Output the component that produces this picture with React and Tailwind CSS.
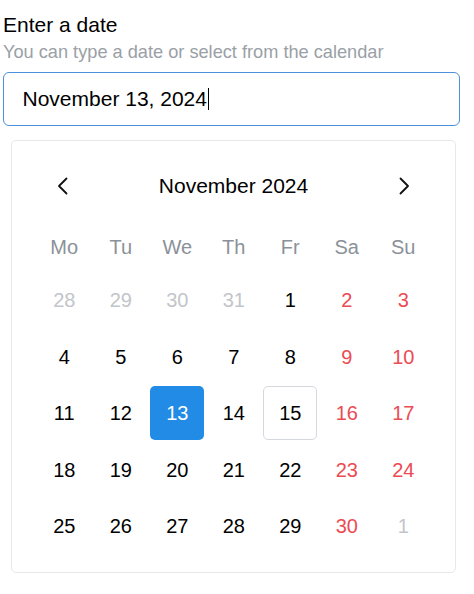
import React from "react";

const weeks = [
  [
    { d: 28, o: true }, { d: 29, o: true }, { d: 30, o: true }, { d: 31, o: true },
    { d: 1 }, { d: 2 }, { d: 3 },
  ],
  [{ d: 4 }, { d: 5 }, { d: 6 }, { d: 7 }, { d: 8 }, { d: 9 }, { d: 10 }],
  [{ d: 11 }, { d: 12 }, { d: 13, sel: true }, { d: 14 }, { d: 15, today: true }, { d: 16 }, { d: 17 }],
  [{ d: 18 }, { d: 19 }, { d: 20 }, { d: 21 }, { d: 22 }, { d: 23 }, { d: 24 }],
  [{ d: 25 }, { d: 26 }, { d: 27 }, { d: 28 }, { d: 29 }, { d: 30 }, { d: 1, o: true }],
];

const weekdays = ["Mo", "Tu", "We", "Th", "Fr", "Sa", "Su"];

function Chevron({ dir }) {
  return (
    <svg width="14" height="18" viewBox="0 0 14 18" fill="none">
      {dir === "left" ? (
        <path d="M10.5 1.5 L3 9 L10.5 16.5" stroke="#111" strokeWidth="1.8" strokeLinecap="round" strokeLinejoin="round" />
      ) : (
        <path d="M3.5 1.5 L11 9 L3.5 16.5" stroke="#111" strokeWidth="1.8" strokeLinecap="round" strokeLinejoin="round" />
      )}
    </svg>
  );
}

function Cell({ c, col }) {
  let cls = "text-black";
  if (c.o) cls = "text-[#c2c5c9]";
  else if (c.sel) cls = "text-white bg-[#228be6] rounded-[5px]";
  else if (col >= 5) cls = "text-[#ec4b54]";
  const border = c.today ? "border-[1.5px] border-[#d5d9dd] rounded-[5px]" : "";
  return (
    <div className="flex items-center justify-center h-[56.5px]">
      <div className={`w-[54px] h-[54px] flex items-center justify-center text-[20px] ${cls} ${border}`}>
        {c.d}
      </div>
    </div>
  );
}

export default function App() {
  return (
    <div
      className="w-[474px] h-[594px] bg-white px-[3px] pt-[12px]"
      style={{ fontFamily: '"Liberation Sans", Arial, sans-serif' }}
    >
      <div className="text-[21px] leading-[25px] text-black">Enter a date</div>
      <div className="text-[18.2px] leading-[22px] text-[#9aa0a6] mt-[4px]">
        You can type a date or select from the calendar
      </div>
      <div className="mt-[9px] w-[457px] h-[54px] border-[1.5px] border-[#4a90dc] rounded-[6px] flex items-center pl-[18.5px] text-[21px] text-black">
        <span>November 13, 2024</span>
        <span className="inline-block w-[1.5px] h-[22px] bg-black ml-[1px]"></span>
      </div>
      <div className="mt-[14px] ml-[8px] w-[445px] h-[433px] border border-[#e6e8eb] rounded-[5px] px-[24px] pt-[18px]">
        <div className="w-[395px] h-[54px] flex items-center justify-between">
          <div className="w-[54px] flex justify-center">
            <Chevron dir="left" />
          </div>
          <div className="text-[21px] text-black">November 2024</div>
          <div className="w-[54px] flex justify-center">
            <Chevron dir="right" />
          </div>
        </div>
        <div className="grid grid-cols-[repeat(7,56.5px)] mt-[19px] h-[30px]">
          {weekdays.map((w) => (
            <div key={w} className="flex items-center justify-center text-[20px] text-[#8b9198]">
              {w}
            </div>
          ))}
        </div>
        <div className="grid grid-cols-[repeat(7,56.5px)] mt-[10px]">
          {weeks.map((wk, i) =>
            wk.map((c, j) => <Cell key={`${i}-${j}`} c={c} col={j} />)
          )}
        </div>
      </div>
    </div>
  );
}
